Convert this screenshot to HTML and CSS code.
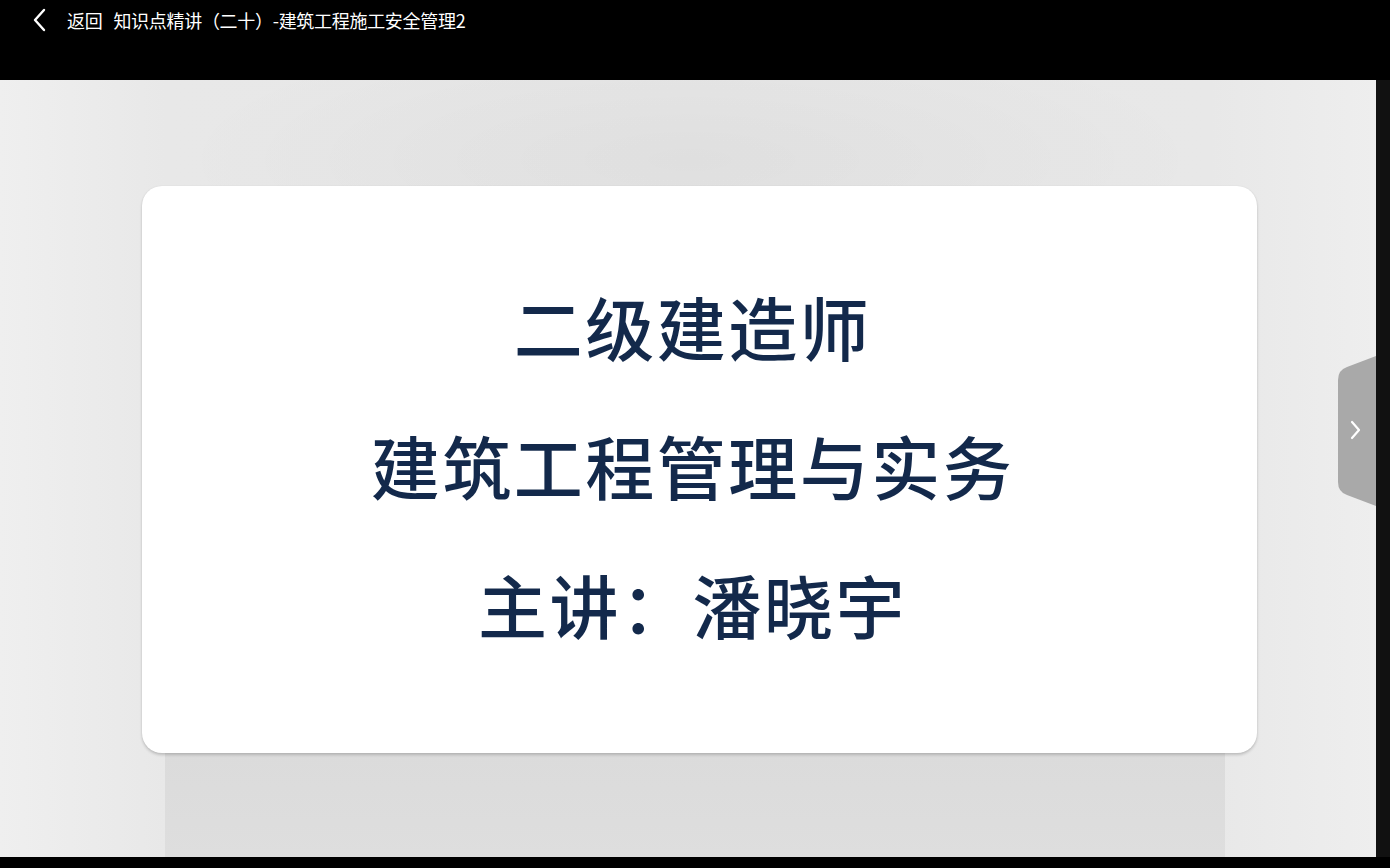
FILE: index.html
```html
<!DOCTYPE html>
<html lang="zh-CN">
<head>
<meta charset="utf-8">
<title>知识点精讲（二十）-建筑工程施工安全管理2</title>
<link rel="stylesheet" href="styles.css">
</head>
<body>
<header class="topbar">
  <svg class="back-icon" width="14" height="24" viewBox="0 0 14 24"><path d="M11 2 L2 12 L11 22" fill="none" stroke="#fff" stroke-width="2.4" stroke-linecap="round" stroke-linejoin="round"/></svg>
  <span class="back-text">返回</span>
  <span class="title">知识点精讲（二十）-建筑工程施工安全管理2</span>
</header>
<main class="stage">
  <section class="video">
    <div class="card">
      <div class="line">二级建造师</div>
      <div class="line">建筑工程管理与实务</div>
      <div class="line">主讲：潘晓宇</div>
    </div>
    <div class="pedestal"></div>
    <svg class="next-tab" width="38" height="150" viewBox="0 0 38 150"><path d="M38 0 L9 11 Q0 14 0 24 L0 126 Q0 136 9 139 L38 150 Z" fill="#a9a9a9"/><path d="M14 66 L21 74 L14 82" fill="none" stroke="#fff" stroke-width="2.2" stroke-linecap="round" stroke-linejoin="round"/></svg>
  </section>
  <div class="side-strip"></div>
</main>
</body>
</html>
```
FILE: styles.css
```css
html, body {
  margin: 0;
  padding: 0;
  background: #000;
  width: 1390px;
  height: 868px;
  overflow: hidden;
}
body {
  font-family: "Noto Sans CJK SC", "Noto Sans", sans-serif;
}
.topbar {
  height: 80px;
  background: #000;
  display: flex;
  align-items: flex-start;
  padding-left: 33px;
  box-sizing: border-box;
  color: #fff;
  font-size: 18px;
  letter-spacing: -0.3px;
}
.back-icon {
  margin-top: 8px;
}
.back-text {
  margin-left: 20px;
  line-height: 40px;
}
.title {
  margin-left: 11px;
  line-height: 40px;
}
.stage {
  display: flex;
  height: 777px;
}
.video {
  position: relative;
  width: 1376px;
  height: 777px;
  background:
    radial-gradient(ellipse 520px 140px at 690px 80px, rgba(0,0,0,0.035), rgba(0,0,0,0) 100%),
    linear-gradient(90deg, #efefef 0%, #e8e8e8 12%, #e7e7e7 50%, #e8e8e8 88%, #eeeeee 100%);
  overflow: hidden;
  display: flex;
  flex-direction: column;
}
.card {
  margin-top: 106px;
  margin-left: 142px;
  width: 1115px;
  height: 567px;
  box-sizing: border-box;
  padding-top: 0;
  padding-bottom: 8px;
  padding-right: 14px;
  background: #fff;
  border-radius: 20px;
  box-shadow: 0 2px 3px rgba(0,0,0,0.18), 0 0 2px rgba(0,0,0,0.06);
  display: flex;
  flex-direction: column;
  justify-content: center;
  align-items: center;
  position: relative;
  z-index: 1;
}
.line {
  font-size: 69px;
  font-weight: 500;
  letter-spacing: 2.5px;
  line-height: 139px;
  color: #13294b;
  white-space: nowrap;
}
.pedestal {
  margin-left: 165px;
  width: 1060px;
  flex: 1;
  background: linear-gradient(180deg, #dbdbdb, #dedede);
}
.next-tab {
  position: absolute;
  left: 1338px;
  top: 276px;
}
.side-strip {
  flex: 1;
  background: #111;
}
```
